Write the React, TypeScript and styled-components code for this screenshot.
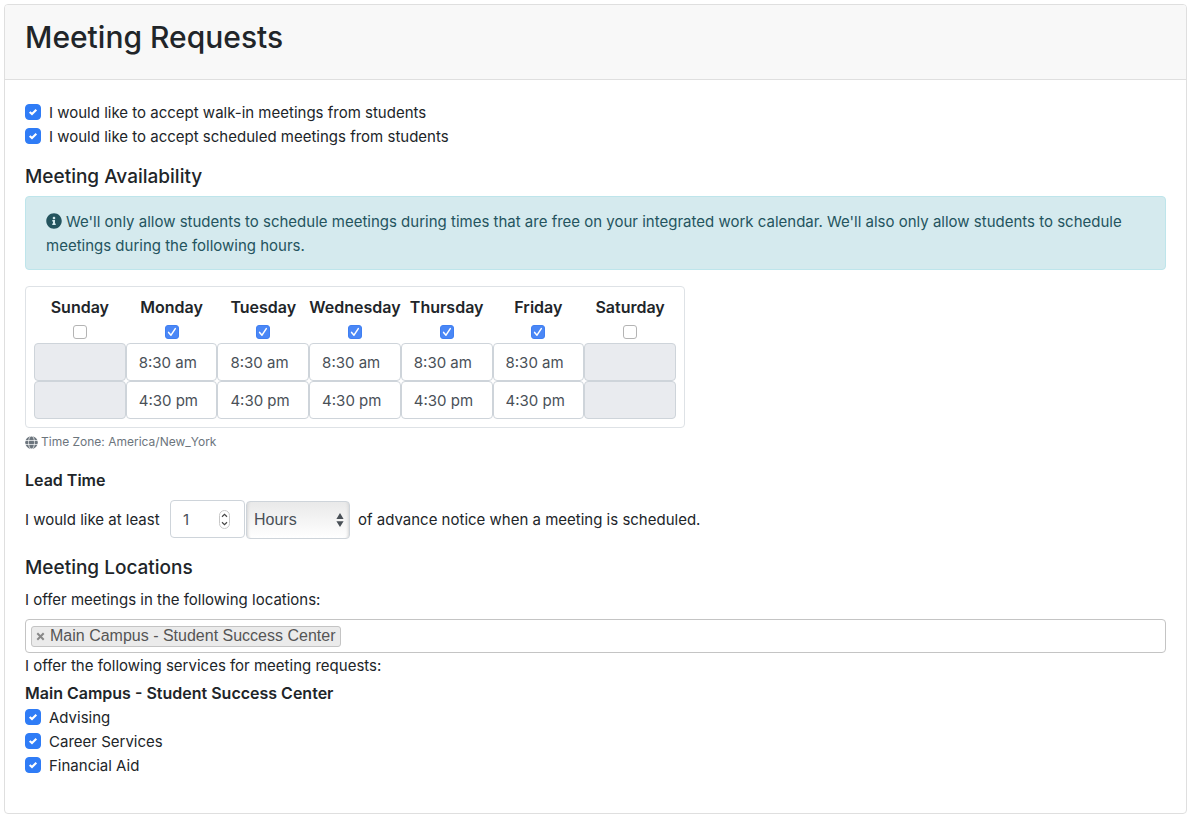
import React from "react";
import styled, { createGlobalStyle, css } from "styled-components";
import { FaInfoCircle } from "react-icons/fa";

const GlobalStyle = createGlobalStyle`
  *, *::before, *::after { box-sizing: border-box; }
  body {
    margin: 0;
    background: #fff;
    color: #212529;
    font-family: Inter, "Liberation Sans", sans-serif;
    font-size: 15px;
    line-height: 24px;
  }
  h1, h2, h3, p { margin: 0; }
  input, select, button { font: inherit; margin: 0; }
`;

const Card = styled.main`
  margin: 4px 5px 0 4px;
  border: 1px solid #dfdfdf;
  border-radius: 4px;
  overflow: hidden;
`;

const CardHeader = styled.header`
  padding: 13px 20px 23px;
  background: #f8f8f8;
  border-bottom: 1px solid #dfdfdf;
`;

const Title = styled.h1`
  font-size: 30px;
  font-weight: 500;
  line-height: 38px;
`;

const CardBody = styled.div`
  padding: 20px 20px 36px;
`;

const SectionTitle = styled.h2`
  padding-top: 1px;
  margin-bottom: 7px;
  font-size: 19px;
  font-weight: 500;
  line-height: 24px;
`;

const StrongTitle = styled.h3`
  font-size: 16px;
  font-weight: 600;
  line-height: 24px;
`;

const Intro = styled.p`
  padding-top: 1px;
`;

const OptionList = styled.div`
  display: flex;
  flex-direction: column;
  align-items: flex-start;
`;

const Preferences = styled(OptionList)`
  margin-bottom: 16px;
`;

const Option = styled.label`
  display: flex;
  align-items: center;
  gap: 8px;
  height: 24px;
`;

const OptionText = styled.span`
  padding-top: 2px;
`;

const TickBox = styled.span<{ $size: number }>`
  display: inline-grid;
  width: ${(p) => p.$size}px;
  height: ${(p) => p.$size}px;

  > * {
    grid-area: 1 / 1;
    width: 100%;
    height: 100%;
  }
  > svg {
    pointer-events: none;
    visibility: hidden;
  }
  > input:checked + svg {
    visibility: visible;
  }
`;

const TickInput = styled.input<{ $native?: boolean }>`
  appearance: none;
  border: 1px solid ${(p) => (p.$native ? "#b4b4b4" : "#adb5bd")};
  border-radius: ${(p) => (p.$native ? 3 : 4)}px;
  background: #fff;

  &:checked {
    border-color: ${(p) => (p.$native ? "#3f7ff2" : "#2f7cf6")};
    background: ${(p) => (p.$native ? "#4a87f6" : "#2f7cf6")};
  }
`;

const Alert = styled.div`
  margin-bottom: 16px;
  padding: 13px 20px 11px;
  border: 1px solid #bee5eb;
  border-radius: 4px;
  background: #d5eaee;
  color: #24545e;
`;

const AlertIcon = styled(FaInfoCircle)`
  width: 16px;
  height: 16px;
  margin-right: 4px;
  vertical-align: -2px;
`;

const Calendar = styled.div`
  max-width: 660px;
  padding: 8px;
  border: 1px solid #dee2e6;
  border-radius: 4px;
`;

const Schedule = styled.table`
  width: 100%;
  table-layout: fixed;
  border-collapse: collapse;

  th, td { padding: 0; }
`;

const DayHeading = styled.th`
  font-size: 16px;
  font-weight: 600;
  text-align: center;
  white-space: nowrap;

  label { display: flex; flex-direction: column; align-items: center; }
`;

const TickRow = styled.span`
  display: flex;
  align-items: center;
  height: 24px;
  padding-top: 2px;
`;

const field = css`
  height: 38px;
  border: 1px solid #ced4da;
  border-radius: 4px;
  background: #fff;
  color: #495057;
`;

const TimeInput = styled.input`
  ${field}
  display: block;
  width: 100%;
  padding: 6px 12px;

  &:disabled { background: #e9ebef; }
`;

const TimeZone = styled.p`
  display: flex;
  align-items: center;
  gap: 3px;
  margin: 2px 0 14px;
  color: #6c757d;
  font-size: 12px;
`;

const LeadTime = styled.section`
  margin-bottom: 16px;
`;

const LeadRow = styled.div`
  display: flex;
  align-items: center;
  gap: 8px;
  margin-top: 8px;
`;

const LeadLabel = styled.label`
  width: 137px;
`;

const FieldGroup = styled.span`
  display: flex;
  gap: 1px;
`;

const NumberBox = styled.span`
  display: inline-grid;
  align-items: center;
  align-self: flex-start;

  > * { grid-area: 1 / 1; }
  > svg {
    justify-self: end;
    margin-right: 15px;
    pointer-events: none;
  }
`;

const NumberInput = styled.input`
  ${field}
  width: 75px;
  padding: 6px 28px 6px 12px;
  appearance: textfield;

  &::-webkit-inner-spin-button { appearance: none; margin: 0; }
`;

const SelectBox = styled(NumberBox)`
  padding-top: 1px;

  > svg { margin-right: 6px; }
`;

const UnitSelect = styled.select`
  ${field}
  width: 104px;
  padding: 0 20px 0 7px;
  appearance: none;
  background: linear-gradient(#e9e9e9, #fff);
  box-shadow: inset 4px 0 3px -3px #d6d6d6, inset -4px 0 3px -3px #d6d6d6;
  font-family: "Liberation Sans", sans-serif;
  font-size: 16px;
`;

const Locations = styled.div`
  display: flex;
  align-items: center;
  margin-top: 7px;
  height: 34px;
  padding: 0 5px;
  border: 1px solid #c4c4c4;
  border-radius: 4px;
`;

const Tag = styled.span`
  display: flex;
  align-items: center;
  gap: 5px;
  height: 21px;
  padding: 0 5px 0 4px;
  border: 1px solid #c4c4c4;
  border-radius: 3px;
  background: #ebebeb;
  color: #555;
  font-family: "Liberation Sans", sans-serif;
  font-size: 16px;
  line-height: 20px;
`;

const RemoveButton = styled.button`
  display: flex;
  padding: 0;
  border: 0;
  background: none;
  color: #888;
`;

const ServiceTitle = styled(StrongTitle)`
  margin-top: 3px;
`;

function CustomTick() {
  return (
    <TickBox $size={16}>
      <TickInput type="checkbox" defaultChecked />
      <svg viewBox="0 0 16 16" aria-hidden="true">
        <path d="M4.7 7.9 7 10.1 11.3 5.7" fill="none" stroke="#fff" strokeWidth="2.1" />
      </svg>
    </TickBox>
  );
}

function DayTick({ checked }: { checked: boolean }) {
  return (
    <TickBox $size={14}>
      <TickInput type="checkbox" $native defaultChecked={checked} />
      <svg viewBox="0 0 14 14" aria-hidden="true">
        <path d="M3.6 7.4 6 10.2 10.3 3.6" fill="none" stroke="#fff" strokeWidth="1.5" strokeLinecap="round" strokeLinejoin="round" />
      </svg>
    </TickBox>
  );
}

function Globe() {
  return (
    <svg width="13" height="13" viewBox="0 0 13 13" aria-hidden="true">
      <circle cx="6.5" cy="6.5" r="6.3" fill="#6c757d" />
      <g fill="none" stroke="#fff" strokeWidth="0.7">
        <ellipse cx="6.5" cy="6.5" rx="3" ry="6.5" />
        <path d="M0 4.5H13M0 8.5H13" />
      </g>
    </svg>
  );
}

const days = [
  { name: "Sunday", open: false },
  { name: "Monday", open: true },
  { name: "Tuesday", open: true },
  { name: "Wednesday", open: true },
  { name: "Thursday", open: true },
  { name: "Friday", open: true },
  { name: "Saturday", open: false },
];

const hours = [
  { label: "start", value: "8:30 am" },
  { label: "end", value: "4:30 pm" },
];

const meetingTypes = ["walk-in", "scheduled"];

const services = ["Advising", "Career Services", "Financial Aid"];

export default function App() {
  return (
    <>
      <GlobalStyle />
      <Card>
        <CardHeader>
          <Title>Meeting Requests</Title>
        </CardHeader>
        <CardBody>
          <Preferences>
            {meetingTypes.map((type) => (
              <Option key={type}>
                <CustomTick />
                <OptionText>{`I would like to accept ${type} meetings from students`}</OptionText>
              </Option>
            ))}
          </Preferences>

          <SectionTitle>Meeting Availability</SectionTitle>
          <Alert>
            <AlertIcon aria-hidden="true" />
            We'll only allow students to schedule meetings during times that are free on your
            integrated work calendar. We'll also only allow students to schedule meetings during
            the following hours.
          </Alert>

          <Calendar>
            <Schedule>
              <thead>
                <tr>
                  {days.map((day) => (
                    <DayHeading key={day.name} scope="col">
                      <label>
                        {day.name}
                        <TickRow><DayTick checked={day.open} /></TickRow>
                      </label>
                    </DayHeading>
                  ))}
                </tr>
              </thead>
              <tbody>
                {hours.map((hour) => (
                  <tr key={hour.label}>
                    {days.map((day) => (
                      <td key={day.name}>
                        <TimeInput
                          type="text"
                          aria-label={`${day.name} ${hour.label}`}
                          defaultValue={day.open ? hour.value : ""}
                          disabled={!day.open}
                        />
                      </td>
                    ))}
                  </tr>
                ))}
              </tbody>
            </Schedule>
          </Calendar>
          <TimeZone><Globe />Time Zone: America/New_York</TimeZone>

          <LeadTime>
            <StrongTitle>Lead Time</StrongTitle>
            <LeadRow>
              <LeadLabel htmlFor="lead-amount">I would like at least</LeadLabel>
              <FieldGroup>
                <NumberBox>
                  <NumberInput id="lead-amount" type="number" defaultValue={1} />
                  <svg width="11" height="19" viewBox="0 0 11 19" aria-hidden="true">
                    <rect x="0.5" y="0.5" width="10" height="18" rx="5" fill="#fff" stroke="#c8c8c8" />
                    <path d="M3 6.7 5.5 4.4 8 6.7M3 12.3 5.5 14.6 8 12.3" fill="none" stroke="#444" strokeWidth="1.2" />
                  </svg>
                </NumberBox>
                <SelectBox>
                  <UnitSelect aria-label="Lead time unit" defaultValue="Hours">
                    <option>Hours</option>
                    <option>Days</option>
                  </UnitSelect>
                  <svg width="8" height="14" viewBox="0 0 8 14" aria-hidden="true">
                    <path d="M4 0 7.6 6H0.4ZM4 14 7.6 8.2H0.4Z" fill="#495057" />
                  </svg>
                </SelectBox>
              </FieldGroup>
              <span>of advance notice when a meeting is scheduled.</span>
            </LeadRow>
          </LeadTime>

          <SectionTitle>Meeting Locations</SectionTitle>
          <Intro>I offer meetings in the following locations:</Intro>
          <Locations>
            <Tag>
              <RemoveButton type="button" aria-label="Remove Main Campus - Student Success Center">
                <svg width="9" height="9" viewBox="0 0 9 9" aria-hidden="true">
                  <path d="M1.3 1.3 7.7 7.7M7.7 1.3 1.3 7.7" stroke="currentColor" strokeWidth="2" />
                </svg>
              </RemoveButton>
              Main Campus - Student Success Center
            </Tag>
          </Locations>
          <Intro>I offer the following services for meeting requests:</Intro>
          <ServiceTitle>Main Campus - Student Success Center</ServiceTitle>
          <OptionList>
            {services.map((service) => (
              <Option key={service}>
                <CustomTick />
                <OptionText>{service}</OptionText>
              </Option>
            ))}
          </OptionList>
        </CardBody>
      </Card>
    </>
  );
}
